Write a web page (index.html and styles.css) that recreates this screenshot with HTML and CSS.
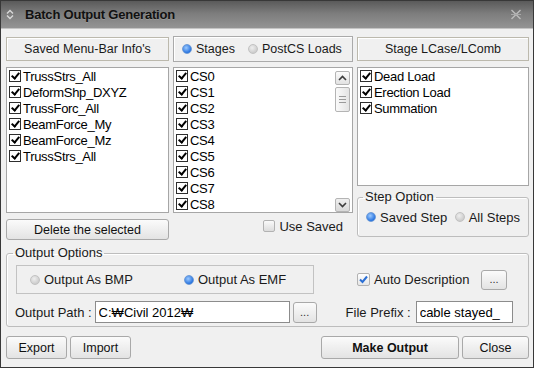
FILE: index.html
```html
<!DOCTYPE html>
<html lang="en">

<head>
    <meta charset="UTF-8">
    <meta name="viewport" content="width=device-width, initial-scale=1.0">
    <title>Batch Output Generation</title>
    <link rel="stylesheet" href="styles.css">
</head>

<body>

    <div class="dialog">
        <div class="titlebar">
            <svg class="grip" width="8" height="11" viewBox="0 0 8 11">
                <path d="M1 4.5 L4 1.5 L7 4.5 M1 6.5 L4 9.5 L7 6.5" fill="none" stroke="#d8d8d8" stroke-width="1.4"/>
            </svg>
            <span class="title">Batch Output Generation</span>
            <svg class="close_x" width="12" height="11" viewBox="0 0 12 11">
                <path d="M1.5 1 L10.5 10 M10.5 1 L1.5 10" stroke="#bcbcbc" stroke-width="1.4"/>
                <path d="M1 5.5 H11" stroke="#a8a8a8" stroke-width="1"/>
            </svg>
        </div>

        <div class="content">
            <div class="columns">

                <div class="col col_left">
                    <div class="head">Saved Menu-Bar Info's</div>
                    <ul class="list list_tall">
                        <li><span class="cb"></span>TrussStrs_All</li>
                        <li><span class="cb"></span>DeformShp_DXYZ</li>
                        <li><span class="cb"></span>TrussForc_All</li>
                        <li><span class="cb"></span>BeamForce_My</li>
                        <li><span class="cb"></span>BeamForce_Mz</li>
                        <li><span class="cb"></span>TrussStrs_All</li>
                    </ul>
                    <button class="btn btn_delete">Delete the selected</button>
                </div>

                <div class="col col_mid">
                    <div class="head head_radio">
                        <label class="opt"><span class="radio on"></span>Stages</label>
                        <label class="opt opt_post"><span class="radio"></span>PostCS Loads</label>
                    </div>
                    <div class="list list_tall list_scroll">
                        <ul class="items">
                            <li><span class="cb"></span>CS0</li>
                            <li><span class="cb"></span>CS1</li>
                            <li><span class="cb"></span>CS2</li>
                            <li><span class="cb"></span>CS3</li>
                            <li><span class="cb"></span>CS4</li>
                            <li><span class="cb"></span>CS5</li>
                            <li><span class="cb"></span>CS6</li>
                            <li><span class="cb"></span>CS7</li>
                            <li><span class="cb"></span>CS8</li>
                        </ul>
                        <div class="scrollbar">
                            <div class="sb_btn">
                                <svg width="9" height="6" viewBox="0 0 9 6"><path d="M1 5 L4.5 1.5 L8 5" fill="none" stroke="#3c3c3c" stroke-width="1.6"/></svg>
                            </div>
                            <div class="sb_thumb"><span></span><span></span><span></span></div>
                            <div class="sb_btn sb_down">
                                <svg width="9" height="6" viewBox="0 0 9 6"><path d="M1 1 L4.5 4.5 L8 1" fill="none" stroke="#3c3c3c" stroke-width="1.6"/></svg>
                            </div>
                        </div>
                    </div>
                    <label class="use_saved"><span class="chk"></span>Use Saved</label>
                </div>

                <div class="col col_right">
                    <div class="head">Stage LCase/LComb</div>
                    <ul class="list list_short">
                        <li><span class="cb"></span>Dead Load</li>
                        <li><span class="cb"></span>Erection Load</li>
                        <li><span class="cb"></span>Summation</li>
                    </ul>
                    <fieldset class="group group_step">
                        <legend>Step Option</legend>
                        <div class="step_row">
                            <label class="opt"><span class="radio on"></span>Saved Step</label>
                            <label class="opt"><span class="radio"></span>All Steps</label>
                        </div>
                    </fieldset>
                </div>

            </div>

            <fieldset class="group group_output">
                <legend>Output Options</legend>
                <div class="out_row">
                    <div class="format_box">
                        <label class="opt opt_bmp"><span class="radio"></span>Output As BMP</label>
                        <label class="opt"><span class="radio on"></span>Output As EMF</label>
                    </div>
                    <label class="auto_desc">
                        <span class="chk on">
                            <svg width="11" height="11" viewBox="0 0 11 11"><path d="M2 5.5 L4.5 8 L9 2.5" fill="none" stroke="#2b6fd4" stroke-width="2"/></svg>
                        </span>Auto Description
                    </label>
                    <button class="btn btn_dots btn_desc">...</button>
                </div>
                <div class="out_row out_row2">
                    <span class="field_label">Output Path :</span>
                    <input class="field field_path" type="text" value="C:₩Civil 2012₩">
                    <button class="btn btn_dots btn_path">...</button>
                    <span class="field_label label_prefix">File Prefix :</span>
                    <input class="field field_prefix" type="text" value="cable stayed_">
                </div>
            </fieldset>

            <div class="footer">
                <button class="btn btn_export">Export</button>
                <button class="btn btn_import">Import</button>
                <button class="btn btn_make">Make Output</button>
                <button class="btn btn_close">Close</button>
            </div>
        </div>
    </div>

</body>

</html>
```

FILE: styles.css
```css
* {
    box-sizing: border-box;
}

body {
    margin: 0;
    background: #f0f0f0;
    font-family: "Liberation Sans", Arial, sans-serif;
    font-size: 12.5px;
    color: #1a1a1a;
}

.dialog {
    width: 534px;
    height: 368px;
    border: 1px solid #383838;
    background: #f0f0f0;
    display: flex;
    flex-direction: column;
}

/* title bar */
.titlebar {
    height: 28px;
    flex: none;
    display: flex;
    align-items: center;
    padding: 0 11px 0 5px;
    background: linear-gradient(#5a5a5a, #7c7c7c 45%, #949494);
    border-bottom: 1px solid #c4c4c4;
}

.grip {
    margin-right: 11px;
}

.title {
    font-size: 13px;
    font-weight: bold;
    letter-spacing: -0.2px;
    color: #111;
    text-shadow: 0 1px 0 rgba(255, 255, 255, 0.15);
}

.close_x {
    margin-left: auto;
}

/* body */
.content {
    flex: 1;
    display: flex;
    flex-direction: column;
    padding: 8px 4px 0 5px;
}

.columns {
    display: flex;
    gap: 4px;
}

.col {
    display: flex;
    flex-direction: column;
}

.col_left {
    width: 163px;
}

.col_mid {
    width: 180px;
}

.col_right {
    width: 172px;
}

.head {
    height: 24px;
    display: flex;
    align-items: center;
    justify-content: center;
    border: 1px solid #bcb9ad;
    box-shadow: inset 1px 1px 0 #fff;
}

.head_radio {
    height: 26px;
    margin: -1px 0;
    justify-content: flex-start;
    padding-left: 8px;
    border-color: #aaaaaa;
}

.opt {
    display: flex;
    align-items: center;
    gap: 4px;
    white-space: nowrap;
}

.opt_post {
    margin-left: 13px;
}

.radio {
    width: 10px;
    height: 10px;
    border-radius: 50%;
    border: 1px solid #c2c2c2;
    background: radial-gradient(circle at 40% 35%, #eeeeee, #cbcbcb 75%);
    flex: none;
}

.radio.on {
    border-color: #6d9ad6;
    background: radial-gradient(circle at 40% 35%, #9ccaff, #2a75e0 70%);
}

/* lists */
.list {
    margin: 6px 0 0;
    padding: 0 0 0 2px;
    list-style: none;
    background: #fff;
    border: 1px solid #a6a6a6;
    font-size: 13px;
    letter-spacing: -0.3px;
    color: #000;
}

.list li {
    height: 16px;
    display: flex;
    align-items: center;
    gap: 2px;
}

.list_tall {
    height: 146px;
}

.list_short {
    height: 119px;
}

.cb {
    position: relative;
    width: 12px;
    height: 12px;
    border: 1px solid #2e2e2e;
    background: #fff;
    flex: none;
}

.cb::after {
    content: "";
    position: absolute;
    left: 3px;
    top: 0;
    width: 3px;
    height: 6px;
    border: solid #000;
    border-width: 0 2px 2px 0;
    transform: rotate(40deg);
}

.list_scroll {
    display: flex;
    padding-right: 1px;
}

.items {
    flex: 1;
    margin: 0;
    padding: 0;
    list-style: none;
}

.scrollbar {
    width: 17px;
    display: flex;
    flex-direction: column;
    align-items: center;
    padding: 3px 0 0;
}

.sb_btn {
    width: 15px;
    height: 14px;
    border: 1px solid #b4b4b4;
    border-radius: 2px;
    background: linear-gradient(#fbfbfb, #e2e2e2);
    display: flex;
    align-items: center;
    justify-content: center;
}

.sb_down {
    margin-top: auto;
    background: linear-gradient(#efefef, #d8d8d8);
}

.sb_thumb {
    width: 15px;
    height: 25px;
    margin-top: 2px;
    border: 1px solid #b4b4b4;
    border-radius: 2px;
    background: linear-gradient(90deg, #fafafa, #e4e4e4);
    display: flex;
    flex-direction: column;
    align-items: center;
    justify-content: center;
    gap: 2px;
}

.sb_thumb span {
    width: 7px;
    height: 1px;
    background: #9a9a9a;
}

.use_saved {
    height: 14px;
    margin-top: 6px;
    padding-right: 10px;
    display: flex;
    align-items: center;
    justify-content: flex-end;
    gap: 4px;
    font-size: 13px;
}

.chk {
    width: 12px;
    height: 12px;
    border: 1px solid #b2b2b2;
    border-radius: 2px;
    background: linear-gradient(#fafafa, #dcdcdc);
    display: flex;
    align-items: center;
    justify-content: center;
    flex: none;
}

.chk.on {
    width: 13px;
    height: 13px;
    background: linear-gradient(#ffffff, #e6e6e6);
}

/* group boxes */
.group {
    margin: 0;
    border: 1px solid #bdbdbd;
    border-radius: 3px;
    box-shadow: inset 1px 1px 0 #fff;
}

.group legend {
    padding: 0 2px;
    margin-left: -3px;
    line-height: 14px;
    font-size: 13px;
}

.group_step {
    margin-top: 4px;
    padding: 3px 8px 9px;
}

.step_row {
    height: 20px;
    display: flex;
    align-items: center;
    justify-content: space-between;
    font-size: 13px;
}

.group_output {
    margin-top: 6px;
    padding: 5px 9px 3px;
}

.out_row {
    display: flex;
    align-items: center;
}

.format_box {
    width: 298px;
    height: 29px;
    border: 1px solid #c2c2c2;
    display: flex;
    align-items: center;
    padding-left: 13px;
    font-size: 13px;
}

.opt_bmp {
    width: 154px;
}

.auto_desc {
    display: flex;
    align-items: center;
    gap: 4px;
    margin-left: 43px;
    font-size: 13px;
}

.out_row2 {
    margin-top: 7px;
    height: 22px;
}

.field_label {
    font-size: 13px;
    margin-left: -1px;
}

.field {
    height: 22px;
    border: 1px solid #8c8c8c;
    background: #fff;
    font-family: inherit;
    font-size: 13px;
    color: #000;
    padding: 0 3px;
}

.field_path {
    width: 195px;
    margin-left: 3px;
}

.field_prefix {
    width: 97px;
    margin-left: 5px;
}

.label_prefix {
    margin-left: 29px;
}

/* buttons */
.btn {
    height: 23px;
    border: 1px solid #a9a9a9;
    border-radius: 3px;
    background: linear-gradient(#fbfbfb, #e3e3e3);
    font-family: inherit;
    font-size: 12.5px;
    color: #111;
    padding: 0;
}

.btn_delete {
    margin-top: 6px;
    height: 21px;
}

.btn_dots {
    width: 24px;
    height: 21px;
    font-size: 11px;
    line-height: 1;
    color: #333;
}

.btn_desc {
    width: 26px;
    height: 20px;
    margin-left: auto;
    margin-right: 12px;
}

.btn_path {
    margin-left: 3px;
}

.footer {
    margin-top: 9px;
    display: flex;
    gap: 3px;
}

.btn_export,
.btn_import {
    width: 61px;
}

.btn_make {
    width: 138px;
    margin-left: auto;
    font-weight: bold;
}

.btn_close {
    width: 67px;
}
```
